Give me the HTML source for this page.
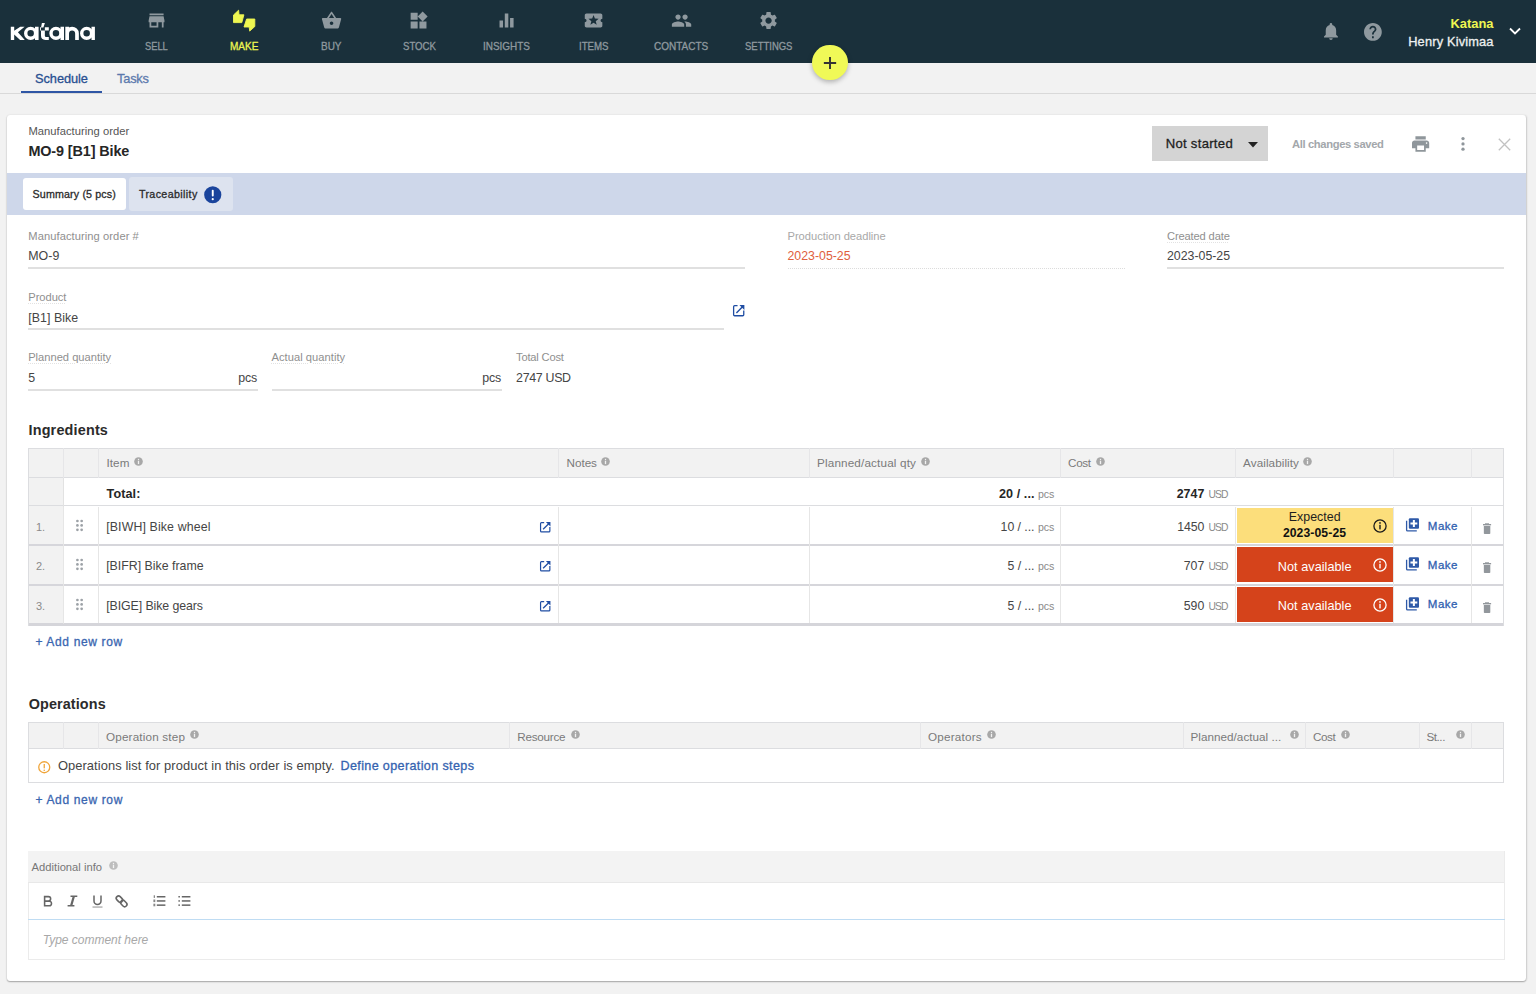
<!DOCTYPE html>
<html><head><meta charset="utf-8"><title>Katana MO-9</title>
<style>
html,body{margin:0;padding:0;}
body{width:1536px;height:994px;overflow:hidden;position:relative;background:#f2f2f2;font-family:"Liberation Sans",sans-serif;}
.t{position:absolute;white-space:nowrap;}
.r{position:absolute;display:block;overflow:visible;}
</style></head><body>
<div class="r" style="left:0px;top:0px;width:1536px;height:62.6px;background:#1a303b;"></div>
<svg class="r" style="left:0px;top:0px;" width="110" height="62" viewBox="0 0 110 62"><path fill="#fff" d="M10.8 26.7H14.2V30.8L20.3 26.7H24.6L17.9 32.3L24.8 39.9H20.1L14.2 34.4V39.9H10.8Z"/>
<g fill="none" stroke="#fff" stroke-width="3.4">
<circle cx="30.65" cy="33.35" r="4.95"/><circle cx="55.95" cy="33.35" r="4.95"/><circle cx="86.65" cy="33.35" r="4.95"/>
</g>
<path fill="#fff" d="M35 26.7H38.6V39.9H35Z M60.5 26.7H64V39.9H60.5Z M91.5 26.7H94.9V39.9H91.5Z"/>
<path fill="none" stroke="#fff" stroke-width="3.7" d="M67.15 39.9V26.7M67.15 33.3A4.93 4.93 0 0 1 77 33.3V39.9"/>
<path fill="#fff" d="M41 27.2V35.5Q41 39.9 45.4 39.9H48.8V36.9H46.1Q44.85 36.9 44.85 35.7V27.2Z M40.1 27.2H48.8V30.4H40.1Z M41 27.6L41.9 22.9H44.9L43.4 27.6Z"/></svg>
<div class="t" style="top:41px;font-size:10.4px;line-height:11px;color:#8f999f;transform:scaleX(0.8961);transform-origin:left center;-webkit-text-stroke:0.3px #8f999f;left:145.10px;">SELL</div>
<div class="t" style="top:41px;font-size:10.4px;line-height:11px;color:#eef651;transform:scaleX(0.9669);transform-origin:left center;-webkit-text-stroke:0.3px #eef651;left:229.65px;">MAKE</div>
<div class="t" style="top:41px;font-size:10.4px;line-height:11px;color:#8f999f;transform:scaleX(0.9586);transform-origin:left center;-webkit-text-stroke:0.3px #8f999f;left:321.15px;">BUY</div>
<div class="t" style="top:41px;font-size:10.4px;line-height:11px;color:#8f999f;transform:scaleX(0.9259);transform-origin:left center;-webkit-text-stroke:0.3px #8f999f;left:402.50px;">STOCK</div>
<div class="t" style="top:41px;font-size:10.4px;line-height:11px;color:#8f999f;transform:scaleX(0.9569);transform-origin:left center;-webkit-text-stroke:0.3px #8f999f;left:483.10px;">INSIGHTS</div>
<div class="t" style="top:41px;font-size:10.4px;line-height:11px;color:#8f999f;transform:scaleX(0.9314);transform-origin:left center;-webkit-text-stroke:0.3px #8f999f;left:579.00px;">ITEMS</div>
<div class="t" style="top:41px;font-size:10.4px;line-height:11px;color:#8f999f;transform:scaleX(0.9623);transform-origin:left center;-webkit-text-stroke:0.3px #8f999f;left:654.25px;">CONTACTS</div>
<div class="t" style="top:41px;font-size:10.4px;line-height:11px;color:#8f999f;transform:scaleX(0.9133);transform-origin:left center;-webkit-text-stroke:0.3px #8f999f;left:745.05px;">SETTINGS</div>
<svg class="r" style="left:146.14px;top:10.42px;" width="21.12" height="21.12" viewBox="0 0 24 24"><path fill="#8f999f" d="M20 4H4v2h16V4zm1 10v-2l-1-5H4l-1 5v2h1v6h10v-6h4v6h2v-6h1zm-9 4H6v-4h6v4z"/></svg>
<svg class="r" style="left:321.02px;top:10.42px;" width="21.12" height="21.12" viewBox="0 0 24 24"><path fill="#8f999f" d="M17.21 9l-4.38-6.56c-.19-.28-.51-.42-.83-.42-.32 0-.64.14-.83.43L6.79 9H2c-.55 0-1 .45-1 1 0 .09.01.18.04.27l2.54 9.27c.23.84 1 1.46 1.92 1.46h13c.92 0 1.69-.62 1.93-1.46l2.54-9.27L23 10c0-.55-.45-1-1-1h-4.790zM9 9l3-4.4L15 9H9zm3 8c-1.1 0-2-.9-2-2s.9-2 2-2 2 .9 2 2-.9 2-2 2z"/></svg>
<svg class="r" style="left:408.26px;top:10.42px;" width="21.12" height="21.12" viewBox="0 0 24 24"><path fill="#8f999f" d="M13 13v8h8v-8h-8zM3 21h8v-8H3v8zM3 3v8h8V3H3zm13.66-1.31L11 7.34 16.66 13l5.66-5.66-5.66-5.65z"/></svg>
<svg class="r" style="left:495.74px;top:10.42px;" width="21.12" height="21.12" viewBox="0 0 24 24"><path fill="#8f999f" d="M10 20h4V4h-4v16zm-6 0h4v-8H4v8zM16 9v11h4V9h-4z"/></svg>
<svg class="r" style="left:583.24px;top:10.42px;" width="21.12" height="21.12" viewBox="0 0 24 24"><path fill="#8f999f" d="M20 12c0-1.1.9-2 2-2V6c0-1.1-.9-2-2-2H4c-1.1 0-1.99.9-1.99 2v4c1.1 0 1.99.9 1.99 2s-.89 2-2 2v4c0 1.1.9 2 2 2h16c1.1 0 2-.9 2-2v-4c-1.1 0-2-.9-2-2zm-4.42 4.8L12 14.5l-3.58 2.3 1.08-4.12-3.29-2.69 4.24-.25L12 5.8l1.54 3.95 4.24.25-3.29 2.69 1.09 4.11z"/></svg>
<svg class="r" style="left:670.87px;top:10.42px;" width="21.12" height="21.12" viewBox="0 0 24 24"><path fill="#8f999f" d="M16 11c1.66 0 2.99-1.34 2.99-3S17.66 5 16 5c-1.66 0-3 1.34-3 3s1.34 3 3 3zm-8 0c1.66 0 2.99-1.34 2.99-3S9.66 5 8 5C6.34 5 5 6.34 5 8s1.34 3 3 3zm0 2c-2.33 0-7 1.17-7 3.5V19h14v-2.5c0-2.33-4.67-3.5-7-3.5zm8 0c-.29 0-.62.02-.97.05 1.16.84 1.97 1.97 1.97 3.45V19h6v-2.5c0-2.33-4.67-3.5-7-3.5z"/></svg>
<svg class="r" style="left:758.24px;top:10.42px;" width="21.12" height="21.12" viewBox="0 0 24 24"><path fill="#8f999f" d="M19.14 12.94c.04-.3.06-.61.06-.94 0-.32-.02-.64-.07-.94l2.03-1.58c.18-.14.23-.41.12-.61l-1.92-3.32c-.12-.22-.37-.29-.59-.22l-2.39.96c-.5-.38-1.03-.7-1.62-.94l-.36-2.54c-.04-.24-.24-.41-.48-.41h-3.84c-.24 0-.43.17-.47.41l-.36 2.54c-.59.24-1.13.57-1.62.94l-2.39-.96c-.22-.08-.47 0-.59.22L2.74 8.87c-.12.21-.08.47.12.61l2.03 1.58c-.05.3-.09.63-.09.94s.02.64.07.94l-2.03 1.58c-.18.14-.23.41-.12.61l1.92 3.32c.12.22.37.29.59.22l2.39-.96c.5.38 1.03.7 1.62.94l.36 2.54c.05.24.24.41.48.41h3.84c.24 0 .44-.17.47-.41l.36-2.54c.59-.24 1.13-.56 1.62-.94l2.39.96c.22.08.47 0 .59-.22l1.92-3.32c.12-.22.07-.47-.12-.61l-2.01-1.58zM12 15.6c-1.98 0-3.6-1.62-3.6-3.6s1.62-3.6 3.6-3.6 3.6 1.62 3.6 3.6-1.62 3.6-3.6 3.6z"/></svg>
<svg class="r" style="left:0px;top:0px;" width="800" height="40" viewBox="0 0 800 40"><path fill="#eef651" stroke="#eef651" stroke-width="0.9" stroke-linejoin="round" d="M233.5 15 L238.6 10.2 L239 14.8 L243.9 14.8 L241.8 22.6 L233.5 22.6 Z M246.6 19 L254.8 19 L254.8 26.5 L249.7 31.1 L249.2 27 L244 27 Z"/></svg>
<div class="r" style="left:812.4px;top:45.1px;width:35.4px;height:35.4px;border-radius:50%;background:#f0f957;box-shadow:0 2px 5px rgba(0,0,0,0.28);"></div>
<svg class="r" style="left:820px;top:53px;" width="20" height="20" viewBox="0 0 20 20"><path d="M10 3.9V16.1M3.85 10H16.15" stroke="#333" stroke-width="1.9" fill="none"/></svg>
<svg class="r" style="left:1324px;top:23px;" width="13.9" height="17.1" viewBox="4 2.5 16 19.5"><path fill="#8f999f" d="M12 22c1.1 0 2-.9 2-2h-4c0 1.1.89 2 2 2zm6-6v-5c0-3.07-1.64-5.64-4.5-6.32V4c0-.83-.67-1.5-1.5-1.5s-1.5.67-1.5 1.5v.68C7.63 5.36 6 7.920 6 11v5l-2 2v1h16v-1l-2-2z"/></svg>
<svg class="r" style="left:1364px;top:22.5px;" width="17.8" height="17.8" viewBox="2 2 20 20"><path fill="#8f999f" d="M12 2C6.48 2 2 6.48 2 12s4.48 10 10 10 10-4.48 10-10S17.520 2 12 2zm1 17h-2v-2h2v2zm2.07-7.75l-.9.92C13.45 12.9 13 13.5 13 15h-2v-.5c0-1.1.45-2.1 1.17-2.83l1.24-1.26c.37-.36.59-.86.59-1.41 0-1.100-.9-2-2-2s-2 .9-2 2H8c0-2.21 1.79-4 4-4s4 1.79 4 4c0 .88-.36 1.68-.93 2.25z"/></svg>
<div class="t" style="top:16px;font-size:12.9px;line-height:15px;color:#eef651;letter-spacing:-0.003px;font-weight:bold;right:42.50px;">Katana</div>
<div class="t" style="top:34px;font-size:12.8px;line-height:15px;color:#eef0f0;letter-spacing:0.173px;-webkit-text-stroke:0.3px #eef0f0;right:42.33px;">Henry Kivimaa</div>
<svg class="r" style="left:1509px;top:27px;" width="12" height="9" viewBox="0 0 12 9"><path d="M1 1.5l5 5 5-5" fill="none" stroke="#fff" stroke-width="1.8"/></svg>
<div class="r" style="left:0px;top:93px;width:1536px;height:1px;background:#d9d9d9;"></div>
<div class="t" style="top:71px;font-size:12.8px;line-height:15px;color:#284f91;letter-spacing:-0.054px;-webkit-text-stroke:0.3px #284f91;left:35.00px;">Schedule</div>
<div class="t" style="top:71px;font-size:12.8px;line-height:15px;color:#5b79ad;letter-spacing:-0.180px;-webkit-text-stroke:0.3px #5b79ad;left:117.00px;">Tasks</div>
<div class="r" style="left:21px;top:90.5px;width:81px;height:2.5px;background:#2f56a5;"></div>
<div class="r" style="left:7px;top:114.8px;width:1518.5px;height:866px;background:#fff;border-radius:3px;box-shadow:0 1px 1.5px rgba(0,0,0,0.30),0.5px 0 2px rgba(0,0,0,0.10);"></div>
<div class="t" style="top:125px;font-size:11.2px;line-height:12px;color:#555;letter-spacing:0.043px;left:28.40px;">Manufacturing order</div>
<div class="t" style="top:143px;font-size:14.4px;line-height:16px;color:#262626;letter-spacing:-0.109px;font-weight:bold;left:28.40px;">MO-9 [B1] Bike</div>
<div class="r" style="left:1151.5px;top:126px;width:116.5px;height:35px;background:#d4d4d4;"></div>
<div class="t" style="top:136px;font-size:13.1px;line-height:15px;color:#1e1e1e;letter-spacing:0.293px;-webkit-text-stroke:0.3px #1e1e1e;left:1165.70px;">Not started</div>
<svg class="r" style="left:1247.5px;top:141.5px;" width="10" height="6" viewBox="0 0 10 6"><path d="M0 0h10L5 5.5z" fill="#222"/></svg>
<div class="t" style="top:138px;font-size:11.2px;line-height:12px;color:#a3a7ab;letter-spacing:-0.358px;font-weight:bold;left:1292.00px;">All changes saved</div>
<svg class="r" style="left:1411.9px;top:135.9px;" width="17.2" height="15.8" viewBox="2 3 20 18"><path fill="#8f969b" d="M19 8H5c-1.66 0-3 1.34-3 3v6h4v4h12v-4h4v-6c0-1.66-1.34-3-3-3zm-3 11H8v-5h8v5zm3-7c-.55 0-1-.45-1-1s.45-1 1-1 1 .45 1 1-.45 1-1 1zm-1-9H6v4h12V3z"/></svg>
<svg class="r" style="left:1458.5px;top:135px;" width="8" height="17" viewBox="0 0 8 17"><g fill="#8f969b"><circle cx="4" cy="3.6" r="1.65"/><circle cx="4" cy="8.9" r="1.65"/><circle cx="4" cy="14.2" r="1.65"/></g></svg>
<svg class="r" style="left:1498px;top:137.5px;" width="13" height="13" viewBox="0 0 13 13"><path d="M0.8 0.8l11.4 11.4M12.2 0.8L0.8 12.2" stroke="#c2c2c2" stroke-width="1.3" fill="none"/></svg>
<div class="r" style="left:7px;top:173px;width:1518.5px;height:42px;background:#ced7ea;"></div>
<div class="r" style="left:23px;top:178.2px;width:102.6px;height:31.9px;background:#fff;border-radius:3px;"></div>
<div class="t" style="top:188px;font-size:10.7px;line-height:12px;color:#2b2b2b;letter-spacing:0.139px;-webkit-text-stroke:0.3px #2b2b2b;left:32.60px;">Summary (5 pcs)</div>
<div class="r" style="left:128.9px;top:176.9px;width:103.8px;height:34.6px;background:#dde3ef;border-radius:3px;"></div>
<div class="t" style="top:188px;font-size:10.7px;line-height:12px;color:#2b2b2b;letter-spacing:0.372px;-webkit-text-stroke:0.3px #2b2b2b;left:138.90px;">Traceability</div>
<svg class="r" style="left:204px;top:185.5px;" width="17.5" height="17.5" viewBox="0 0 17.5 17.5"><circle cx="8.75" cy="8.75" r="8.6" fill="#1a449c"/><rect x="7.8" y="3.8" width="1.9" height="6.7" rx="0.9" fill="#fff"/><circle cx="8.75" cy="13.2" r="1.1" fill="#fff"/></svg>
<div class="t" style="top:230px;font-size:11.15px;line-height:12px;color:#8f8f8f;letter-spacing:0.076px;left:28.30px;">Manufacturing order #</div>
<div class="t" style="top:249px;font-size:12.4px;line-height:14px;color:#454545;letter-spacing:-0.000px;left:28.30px;">MO-9</div>
<div class="r" style="left:28px;top:267.3px;width:717px;height:2.0px;background:#e0e0e0;"></div>
<div class="t" style="top:230px;font-size:11.15px;line-height:12px;color:#a8a8a8;letter-spacing:-0.015px;left:787.50px;">Production deadline</div>
<div class="t" style="top:249px;font-size:12.35px;line-height:14px;color:#e0603d;letter-spacing:-0.008px;left:787.50px;">2023-05-25</div>
<div class="r" style="left:787.5px;top:267.5px;width:337px;height:0;border-top:1.5px dotted #dcdcdc;"></div>
<div class="t" style="top:230px;font-size:11.15px;line-height:12px;color:#8f8f8f;letter-spacing:-0.143px;left:1167.00px;text-decoration:underline dotted #e2e2e2;text-underline-offset:2px;">Created date</div>
<div class="t" style="top:249px;font-size:12.35px;line-height:14px;color:#454545;letter-spacing:-0.008px;left:1167.00px;">2023-05-25</div>
<div class="r" style="left:1167px;top:267.3px;width:337px;height:2.0px;background:#e0e0e0;"></div>
<div class="t" style="top:291px;font-size:11.15px;line-height:12px;color:#8f8f8f;letter-spacing:-0.038px;left:28.30px;text-decoration:underline dotted #e2e2e2;text-underline-offset:2px;">Product</div>
<div class="t" style="top:311px;font-size:12.4px;line-height:14px;color:#454545;letter-spacing:0.022px;left:28.30px;">[B1] Bike</div>
<div class="r" style="left:28px;top:328px;width:696px;height:2px;background:#e0e0e0;"></div>
<svg class="r" style="left:732.8px;top:305.3px;" width="12.0" height="12.0" viewBox="0 0 11.6 11.6"><g fill="none" stroke="#1f4da3" stroke-width="1.25"><path d="M4.4 0.6H1.6Q0.6 0.6 0.6 1.6V9.4Q0.6 10.4 1.6 10.4H9.4Q10.4 10.4 10.4 9.4V5.4"/><path d="M3.3 7.7L9.2 1.8" stroke-width="1.35"/></g><path d="M6.2 0H11V4.8Z" fill="#1f4da3"/></svg>
<div class="t" style="top:351px;font-size:11.15px;line-height:12px;color:#8f8f8f;letter-spacing:-0.005px;left:28.20px;text-decoration:underline dotted #e2e2e2;text-underline-offset:2px;">Planned quantity</div>
<div class="t" style="top:371px;font-size:12.4px;line-height:14px;color:#454545;left:28.30px;">5</div>
<div class="t" style="top:371px;font-size:12.4px;line-height:14px;color:#454545;letter-spacing:-0.148px;right:1278.85px;">pcs</div>
<div class="r" style="left:28px;top:389px;width:229.5px;height:2px;background:#e0e0e0;"></div>
<div class="t" style="top:351px;font-size:11.15px;line-height:12px;color:#8f8f8f;letter-spacing:0.040px;left:271.50px;text-decoration:underline dotted #e2e2e2;text-underline-offset:2px;">Actual quantity</div>
<div class="t" style="top:371px;font-size:12.4px;line-height:14px;color:#454545;letter-spacing:-0.148px;right:1034.85px;">pcs</div>
<div class="r" style="left:271.5px;top:389px;width:230.0px;height:2px;background:#e0e0e0;"></div>
<div class="t" style="top:351px;font-size:11.15px;line-height:12px;color:#8f8f8f;letter-spacing:-0.197px;left:516.10px;">Total Cost</div>
<div class="t" style="top:371px;font-size:12.4px;line-height:14px;color:#454545;letter-spacing:-0.316px;left:516.10px;">2747 USD</div>
<div class="t" style="top:422px;font-size:14.4px;line-height:16px;color:#2b2b2b;letter-spacing:0.179px;font-weight:bold;left:28.50px;">Ingredients</div>
<div class="r" style="left:28px;top:448px;width:1476px;height:29.5px;background:#f2f2f2;"></div>
<div class="r" style="left:28px;top:477.5px;width:35.5px;height:147.0px;background:#f2f2f2;"></div>
<div class="r" style="left:28px;top:448px;width:1476px;height:1px;background:#dcdde0;"></div>
<div class="r" style="left:28px;top:477px;width:1476px;height:1px;background:#dcdde0;"></div>
<div class="r" style="left:28px;top:505px;width:1476px;height:1px;background:#dcdde0;"></div>
<div class="r" style="left:28px;top:544.2px;width:1476px;height:2.0px;background:#d6d6db;"></div>
<div class="r" style="left:28px;top:584px;width:1476px;height:1.6000000000000227px;background:#d6d6db;"></div>
<div class="r" style="left:28px;top:623.2px;width:1476px;height:2.7999999999999545px;background:#d5d5da;"></div>
<div class="r" style="left:28px;top:448px;width:1px;height:177.5px;background:#dcdde0;"></div>
<div class="r" style="left:1503px;top:448px;width:1px;height:177.5px;background:#dcdde0;"></div>
<div class="r" style="left:63px;top:448px;width:1px;height:29.5px;background:#e6e6e8;"></div>
<div class="r" style="left:98px;top:448px;width:1px;height:29.5px;background:#e6e6e8;"></div>
<div class="r" style="left:558px;top:448px;width:1px;height:29.5px;background:#e6e6e8;"></div>
<div class="r" style="left:809px;top:448px;width:1px;height:29.5px;background:#e6e6e8;"></div>
<div class="r" style="left:1060px;top:448px;width:1px;height:29.5px;background:#e6e6e8;"></div>
<div class="r" style="left:1235px;top:448px;width:1px;height:29.5px;background:#e6e6e8;"></div>
<div class="r" style="left:1392.5px;top:448px;width:1.0px;height:29.5px;background:#e6e6e8;"></div>
<div class="r" style="left:1471px;top:448px;width:1px;height:29.5px;background:#e6e6e8;"></div>
<div class="r" style="left:63px;top:477.5px;width:1px;height:146.5px;background:#e2e2e2;"></div>
<div class="r" style="left:63px;top:506.5px;width:1px;height:116.5px;background:#e6e6e6;"></div>
<div class="r" style="left:98px;top:506.5px;width:1px;height:116.5px;background:#e6e6e6;"></div>
<div class="r" style="left:558px;top:506.5px;width:1px;height:116.5px;background:#e6e6e6;"></div>
<div class="r" style="left:809px;top:506.5px;width:1px;height:116.5px;background:#e6e6e6;"></div>
<div class="r" style="left:1060px;top:506.5px;width:1px;height:116.5px;background:#e6e6e6;"></div>
<div class="r" style="left:1235px;top:506.5px;width:1px;height:116.5px;background:#e6e6e6;"></div>
<div class="r" style="left:1392.5px;top:506.5px;width:1.0px;height:116.5px;background:#e6e6e6;"></div>
<div class="r" style="left:1471px;top:506.5px;width:1px;height:116.5px;background:#e6e6e6;"></div>
<div class="t" style="top:456px;font-size:11.7px;line-height:13px;color:#7a7a7a;letter-spacing:0.015px;left:106.60px;">Item</div>
<svg class="r" style="left:134.2px;top:456.5px;" width="9" height="9" viewBox="0 0 9 9"><circle cx="4.5" cy="4.5" r="4.3" fill="#a8a8a8"/><rect x="3.85" y="3.7" width="1.3" height="3.4" fill="#f2f2f2"/><circle cx="4.5" cy="2.4" r="0.7" fill="#f2f2f2"/></svg>
<div class="t" style="top:456px;font-size:11.7px;line-height:13px;color:#7a7a7a;letter-spacing:-0.016px;left:566.50px;">Notes</div>
<svg class="r" style="left:601.3px;top:456.5px;" width="9" height="9" viewBox="0 0 9 9"><circle cx="4.5" cy="4.5" r="4.3" fill="#a8a8a8"/><rect x="3.85" y="3.7" width="1.3" height="3.4" fill="#f2f2f2"/><circle cx="4.5" cy="2.4" r="0.7" fill="#f2f2f2"/></svg>
<div class="t" style="top:456px;font-size:11.7px;line-height:13px;color:#7a7a7a;letter-spacing:0.161px;left:817.00px;">Planned/actual qty</div>
<svg class="r" style="left:920.8px;top:456.5px;" width="9" height="9" viewBox="0 0 9 9"><circle cx="4.5" cy="4.5" r="4.3" fill="#a8a8a8"/><rect x="3.85" y="3.7" width="1.3" height="3.4" fill="#f2f2f2"/><circle cx="4.5" cy="2.4" r="0.7" fill="#f2f2f2"/></svg>
<div class="t" style="top:456px;font-size:11.7px;line-height:13px;color:#7a7a7a;letter-spacing:-0.352px;left:1068.10px;">Cost</div>
<svg class="r" style="left:1095.5px;top:456.5px;" width="9" height="9" viewBox="0 0 9 9"><circle cx="4.5" cy="4.5" r="4.3" fill="#a8a8a8"/><rect x="3.85" y="3.7" width="1.3" height="3.4" fill="#f2f2f2"/><circle cx="4.5" cy="2.4" r="0.7" fill="#f2f2f2"/></svg>
<div class="t" style="top:456px;font-size:11.7px;line-height:13px;color:#7a7a7a;letter-spacing:0.076px;left:1243.10px;">Availability</div>
<svg class="r" style="left:1303.3px;top:456.5px;" width="9" height="9" viewBox="0 0 9 9"><circle cx="4.5" cy="4.5" r="4.3" fill="#a8a8a8"/><rect x="3.85" y="3.7" width="1.3" height="3.4" fill="#f2f2f2"/><circle cx="4.5" cy="2.4" r="0.7" fill="#f2f2f2"/></svg>
<div class="t" style="top:487px;font-size:12.6px;line-height:14px;color:#262626;letter-spacing:0.088px;font-weight:bold;left:106.60px;">Total:</div>
<div class="t" style="top:487px;font-size:12.6px;line-height:14px;color:#262626;letter-spacing:0.069px;font-weight:bold;left:999.00px;">20 / ...</div>
<div class="t" style="top:488px;font-size:10.6px;line-height:12px;color:#8a8a8a;letter-spacing:-0.198px;right:482.00px;">pcs</div>
<div class="t" style="top:487px;font-size:12.4px;line-height:14px;color:#262626;letter-spacing:0.005px;font-weight:bold;left:1176.70px;">2747</div>
<div class="t" style="top:489px;font-size:10.3px;line-height:11px;color:#8a8a8a;letter-spacing:-0.874px;right:308.37px;">USD</div>
<div class="t" style="top:521px;font-size:11px;line-height:12px;color:#8a8a8a;left:35.90px;">1.</div>
<svg class="r" style="left:75px;top:518px;" width="10" height="15" viewBox="0 0 10 15"><circle cx="2.40" cy="3.00" r="1.35" fill="#9da2a7"/><circle cx="2.40" cy="7.40" r="1.35" fill="#9da2a7"/><circle cx="2.40" cy="11.80" r="1.35" fill="#9da2a7"/><circle cx="6.65" cy="3.00" r="1.35" fill="#9da2a7"/><circle cx="6.65" cy="7.40" r="1.35" fill="#9da2a7"/><circle cx="6.65" cy="11.80" r="1.35" fill="#9da2a7"/></svg>
<div class="t" style="top:520px;font-size:12.35px;line-height:14px;color:#454545;letter-spacing:0.127px;left:106.20px;">[BIWH] Bike wheel</div>
<svg class="r" style="left:539.9px;top:521.9px;" width="11.0" height="11.0" viewBox="0 0 11.6 11.6"><g fill="none" stroke="#1f4da3" stroke-width="1.25"><path d="M4.4 0.6H1.6Q0.6 0.6 0.6 1.6V9.4Q0.6 10.4 1.6 10.4H9.4Q10.4 10.4 10.4 9.4V5.4"/><path d="M3.3 7.7L9.2 1.8" stroke-width="1.35"/></g><path d="M6.2 0H11V4.8Z" fill="#1f4da3"/></svg>
<div class="t" style="top:520px;font-size:12.3px;line-height:14px;color:#454545;letter-spacing:-0.041px;left:1000.60px;">10 / ...</div>
<div class="t" style="top:521px;font-size:10.6px;line-height:12px;color:#8a8a8a;letter-spacing:-0.198px;right:482.00px;">pcs</div>
<div class="t" style="top:520px;font-size:12.3px;line-height:14px;color:#454545;letter-spacing:-0.088px;left:1177.20px;">1450</div>
<div class="t" style="top:522px;font-size:10.3px;line-height:11px;color:#8a8a8a;letter-spacing:-0.874px;right:308.37px;">USD</div>
<div class="r" style="left:1237px;top:507.6px;width:155.5999999999999px;height:35.60000000000002px;background:#fcde7b;"></div>
<div class="t" style="top:510px;font-size:12.4px;line-height:14px;color:#1e1e1e;letter-spacing:0.043px;left:1288.70px;">Expected</div>
<div class="t" style="top:526px;font-size:12.2px;line-height:14px;color:#111;letter-spacing:0.088px;font-weight:bold;left:1282.90px;">2023-05-25</div>
<svg class="r" style="left:1372.5px;top:518.8px;" width="14" height="14" viewBox="0 0 14 14"><circle cx="7" cy="7" r="6.1" fill="none" stroke="#1a1a1a" stroke-width="1.3"/><rect x="6.3" y="5.8" width="1.4" height="4.6" fill="#1a1a1a"/><circle cx="7" cy="3.9" r="0.85" fill="#1a1a1a"/></svg>
<svg class="r" style="left:1402px;top:514px;" width="20" height="20" viewBox="0 0 20 20"><rect x="6.84" y="4.2" width="10.16" height="10.6" rx="1.1" fill="#2f5aa8"/><path fill="#fff" d="M8.45 8.56H15.3V10.56H8.45Z M10.87 6.1H12.87V12.9H10.87Z"/><path d="M4.6 6.8V15.9Q4.6 16.85 5.55 16.85H14.8" fill="none" stroke="#2f5aa8" stroke-width="1.3"/></svg>
<div class="t" style="top:520px;font-size:11.5px;line-height:12px;color:#3060b0;letter-spacing:0.526px;-webkit-text-stroke:0.3px #3060b0;left:1427.80px;">Make</div>
<svg class="r" style="left:1477px;top:518px;" width="20" height="20" viewBox="0 0 20 20"><g fill="#92979c"><rect x="6" y="6" width="8.1" height="1.4"/><rect x="8" y="5.3" width="4" height="1"/><path d="M6.84 8H13.3V15.2Q13.3 16 12.5 16H7.64Q6.84 16 6.84 15.2Z"/></g></svg>
<div class="t" style="top:560px;font-size:11px;line-height:12px;color:#8a8a8a;left:35.90px;">2.</div>
<svg class="r" style="left:75px;top:557px;" width="10" height="15" viewBox="0 0 10 15"><circle cx="2.40" cy="3.00" r="1.35" fill="#9da2a7"/><circle cx="2.40" cy="7.40" r="1.35" fill="#9da2a7"/><circle cx="2.40" cy="11.80" r="1.35" fill="#9da2a7"/><circle cx="6.65" cy="3.00" r="1.35" fill="#9da2a7"/><circle cx="6.65" cy="7.40" r="1.35" fill="#9da2a7"/><circle cx="6.65" cy="11.80" r="1.35" fill="#9da2a7"/></svg>
<div class="t" style="top:559px;font-size:12.35px;line-height:14px;color:#454545;letter-spacing:-0.003px;left:106.20px;">[BIFR] Bike frame</div>
<svg class="r" style="left:539.9px;top:561.1999999999999px;" width="11.0" height="11.0" viewBox="0 0 11.6 11.6"><g fill="none" stroke="#1f4da3" stroke-width="1.25"><path d="M4.4 0.6H1.6Q0.6 0.6 0.6 1.6V9.4Q0.6 10.4 1.6 10.4H9.4Q10.4 10.4 10.4 9.4V5.4"/><path d="M3.3 7.7L9.2 1.8" stroke-width="1.35"/></g><path d="M6.2 0H11V4.8Z" fill="#1f4da3"/></svg>
<div class="t" style="top:559px;font-size:12.3px;line-height:14px;color:#454545;letter-spacing:-0.057px;left:1007.50px;">5 / ...</div>
<div class="t" style="top:560px;font-size:10.6px;line-height:12px;color:#8a8a8a;letter-spacing:-0.198px;right:482.00px;">pcs</div>
<div class="t" style="top:559px;font-size:12.3px;line-height:14px;color:#454545;letter-spacing:-0.011px;left:1183.80px;">707</div>
<div class="t" style="top:561px;font-size:10.3px;line-height:11px;color:#8a8a8a;letter-spacing:-0.874px;right:308.37px;">USD</div>
<div class="r" style="left:1237px;top:547px;width:155.5999999999999px;height:35.299999999999955px;background:#d5431b;"></div>
<div class="t" style="top:560px;font-size:12.7px;line-height:14px;color:#fff;letter-spacing:0.031px;left:1277.80px;">Not available</div>
<svg class="r" style="left:1372.5px;top:558.2px;" width="14" height="14" viewBox="0 0 14 14"><circle cx="7" cy="7" r="6.1" fill="none" stroke="#fff" stroke-width="1.3"/><rect x="6.3" y="5.8" width="1.4" height="4.6" fill="#fff"/><circle cx="7" cy="3.9" r="0.85" fill="#fff"/></svg>
<svg class="r" style="left:1402px;top:553px;" width="20" height="20" viewBox="0 0 20 20"><rect x="6.84" y="4.2" width="10.16" height="10.6" rx="1.1" fill="#2f5aa8"/><path fill="#fff" d="M8.45 8.56H15.3V10.56H8.45Z M10.87 6.1H12.87V12.9H10.87Z"/><path d="M4.6 6.8V15.9Q4.6 16.85 5.55 16.85H14.8" fill="none" stroke="#2f5aa8" stroke-width="1.3"/></svg>
<div class="t" style="top:559px;font-size:11.5px;line-height:12px;color:#3060b0;letter-spacing:0.526px;-webkit-text-stroke:0.3px #3060b0;left:1427.80px;">Make</div>
<svg class="r" style="left:1477px;top:557px;" width="20" height="20" viewBox="0 0 20 20"><g fill="#92979c"><rect x="6" y="6" width="8.1" height="1.4"/><rect x="8" y="5.3" width="4" height="1"/><path d="M6.84 8H13.3V15.2Q13.3 16 12.5 16H7.64Q6.84 16 6.84 15.2Z"/></g></svg>
<div class="t" style="top:600px;font-size:11px;line-height:12px;color:#8a8a8a;left:35.90px;">3.</div>
<svg class="r" style="left:75px;top:597px;" width="10" height="15" viewBox="0 0 10 15"><circle cx="2.40" cy="3.00" r="1.35" fill="#9da2a7"/><circle cx="2.40" cy="7.40" r="1.35" fill="#9da2a7"/><circle cx="2.40" cy="11.80" r="1.35" fill="#9da2a7"/><circle cx="6.65" cy="3.00" r="1.35" fill="#9da2a7"/><circle cx="6.65" cy="7.40" r="1.35" fill="#9da2a7"/><circle cx="6.65" cy="11.80" r="1.35" fill="#9da2a7"/></svg>
<div class="t" style="top:599px;font-size:12.35px;line-height:14px;color:#454545;letter-spacing:-0.085px;left:106.20px;">[BIGE] Bike gears</div>
<svg class="r" style="left:539.9px;top:600.6999999999999px;" width="11.0" height="11.0" viewBox="0 0 11.6 11.6"><g fill="none" stroke="#1f4da3" stroke-width="1.25"><path d="M4.4 0.6H1.6Q0.6 0.6 0.6 1.6V9.4Q0.6 10.4 1.6 10.4H9.4Q10.4 10.4 10.4 9.4V5.4"/><path d="M3.3 7.7L9.2 1.8" stroke-width="1.35"/></g><path d="M6.2 0H11V4.8Z" fill="#1f4da3"/></svg>
<div class="t" style="top:599px;font-size:12.3px;line-height:14px;color:#454545;letter-spacing:-0.057px;left:1007.50px;">5 / ...</div>
<div class="t" style="top:600px;font-size:10.6px;line-height:12px;color:#8a8a8a;letter-spacing:-0.198px;right:482.00px;">pcs</div>
<div class="t" style="top:599px;font-size:12.3px;line-height:14px;color:#454545;letter-spacing:-0.011px;left:1183.80px;">590</div>
<div class="t" style="top:601px;font-size:10.3px;line-height:11px;color:#8a8a8a;letter-spacing:-0.874px;right:308.37px;">USD</div>
<div class="r" style="left:1237px;top:586.6px;width:155.5999999999999px;height:35.299999999999955px;background:#d5431b;"></div>
<div class="t" style="top:599px;font-size:12.7px;line-height:14px;color:#fff;letter-spacing:0.031px;left:1277.80px;">Not available</div>
<svg class="r" style="left:1372.5px;top:597.8000000000001px;" width="14" height="14" viewBox="0 0 14 14"><circle cx="7" cy="7" r="6.1" fill="none" stroke="#fff" stroke-width="1.3"/><rect x="6.3" y="5.8" width="1.4" height="4.6" fill="#fff"/><circle cx="7" cy="3.9" r="0.85" fill="#fff"/></svg>
<svg class="r" style="left:1402px;top:593px;" width="20" height="20" viewBox="0 0 20 20"><rect x="6.84" y="4.2" width="10.16" height="10.6" rx="1.1" fill="#2f5aa8"/><path fill="#fff" d="M8.45 8.56H15.3V10.56H8.45Z M10.87 6.1H12.87V12.9H10.87Z"/><path d="M4.6 6.8V15.9Q4.6 16.85 5.55 16.85H14.8" fill="none" stroke="#2f5aa8" stroke-width="1.3"/></svg>
<div class="t" style="top:598px;font-size:11.5px;line-height:12px;color:#3060b0;letter-spacing:0.526px;-webkit-text-stroke:0.3px #3060b0;left:1427.80px;">Make</div>
<svg class="r" style="left:1477px;top:597px;" width="20" height="20" viewBox="0 0 20 20"><g fill="#92979c"><rect x="6" y="6" width="8.1" height="1.4"/><rect x="8" y="5.3" width="4" height="1"/><path d="M6.84 8H13.3V15.2Q13.3 16 12.5 16H7.64Q6.84 16 6.84 15.2Z"/></g></svg>
<div class="t" style="top:635px;font-size:12px;line-height:14px;color:#3a66b0;letter-spacing:0.646px;-webkit-text-stroke:0.3px #3a66b0;left:35.40px;">+ Add new row</div>
<div class="t" style="top:696px;font-size:14.4px;line-height:16px;color:#2b2b2b;letter-spacing:0.109px;font-weight:bold;left:28.70px;">Operations</div>
<div class="r" style="left:28px;top:721.5px;width:1476px;height:27.200000000000045px;background:#f2f2f2;"></div>
<div class="r" style="left:28px;top:721.5px;width:1476px;height:1.0px;background:#dcdde0;"></div>
<div class="r" style="left:28px;top:747.7px;width:1476px;height:1.0px;background:#dcdde0;"></div>
<div class="r" style="left:28px;top:782.3px;width:1476px;height:1.0px;background:#dcdde0;"></div>
<div class="r" style="left:28px;top:721.5px;width:1px;height:61.799999999999955px;background:#dcdde0;"></div>
<div class="r" style="left:1503px;top:721.5px;width:1px;height:61.799999999999955px;background:#dcdde0;"></div>
<div class="r" style="left:63px;top:721.5px;width:1px;height:27.200000000000045px;background:#e6e6e8;"></div>
<div class="r" style="left:98px;top:721.5px;width:1px;height:27.200000000000045px;background:#e6e6e8;"></div>
<div class="r" style="left:509px;top:721.5px;width:1px;height:27.200000000000045px;background:#e6e6e8;"></div>
<div class="r" style="left:920px;top:721.5px;width:1px;height:27.200000000000045px;background:#e6e6e8;"></div>
<div class="r" style="left:1183px;top:721.5px;width:1px;height:27.200000000000045px;background:#e6e6e8;"></div>
<div class="r" style="left:1305px;top:721.5px;width:1px;height:27.200000000000045px;background:#e6e6e8;"></div>
<div class="r" style="left:1419px;top:721.5px;width:1px;height:27.200000000000045px;background:#e6e6e8;"></div>
<div class="r" style="left:1471px;top:721.5px;width:1px;height:27.200000000000045px;background:#e6e6e8;"></div>
<div class="t" style="top:730px;font-size:11.7px;line-height:13px;color:#7a7a7a;letter-spacing:0.173px;left:106.00px;">Operation step</div>
<svg class="r" style="left:189.6px;top:730.3px;" width="9" height="9" viewBox="0 0 9 9"><circle cx="4.5" cy="4.5" r="4.3" fill="#a8a8a8"/><rect x="3.85" y="3.7" width="1.3" height="3.4" fill="#f2f2f2"/><circle cx="4.5" cy="2.4" r="0.7" fill="#f2f2f2"/></svg>
<div class="t" style="top:730px;font-size:11.7px;line-height:13px;color:#7a7a7a;letter-spacing:-0.239px;left:517.20px;">Resource</div>
<svg class="r" style="left:570.5px;top:730.3px;" width="9" height="9" viewBox="0 0 9 9"><circle cx="4.5" cy="4.5" r="4.3" fill="#a8a8a8"/><rect x="3.85" y="3.7" width="1.3" height="3.4" fill="#f2f2f2"/><circle cx="4.5" cy="2.4" r="0.7" fill="#f2f2f2"/></svg>
<div class="t" style="top:730px;font-size:11.7px;line-height:13px;color:#7a7a7a;letter-spacing:0.222px;left:927.90px;">Operators</div>
<svg class="r" style="left:986.5px;top:730.3px;" width="9" height="9" viewBox="0 0 9 9"><circle cx="4.5" cy="4.5" r="4.3" fill="#a8a8a8"/><rect x="3.85" y="3.7" width="1.3" height="3.4" fill="#f2f2f2"/><circle cx="4.5" cy="2.4" r="0.7" fill="#f2f2f2"/></svg>
<div class="t" style="top:730px;font-size:11.7px;line-height:13px;color:#7a7a7a;letter-spacing:0.029px;left:1190.50px;">Planned/actual ...</div>
<svg class="r" style="left:1289.6px;top:730.3px;" width="9" height="9" viewBox="0 0 9 9"><circle cx="4.5" cy="4.5" r="4.3" fill="#a8a8a8"/><rect x="3.85" y="3.7" width="1.3" height="3.4" fill="#f2f2f2"/><circle cx="4.5" cy="2.4" r="0.7" fill="#f2f2f2"/></svg>
<div class="t" style="top:730px;font-size:11.7px;line-height:13px;color:#7a7a7a;letter-spacing:-0.419px;left:1313.00px;">Cost</div>
<svg class="r" style="left:1341.2px;top:730.3px;" width="9" height="9" viewBox="0 0 9 9"><circle cx="4.5" cy="4.5" r="4.3" fill="#a8a8a8"/><rect x="3.85" y="3.7" width="1.3" height="3.4" fill="#f2f2f2"/><circle cx="4.5" cy="2.4" r="0.7" fill="#f2f2f2"/></svg>
<div class="t" style="top:730px;font-size:11.7px;line-height:13px;color:#7a7a7a;letter-spacing:-0.476px;left:1426.50px;">St...</div>
<svg class="r" style="left:1455.8px;top:730.3px;" width="9" height="9" viewBox="0 0 9 9"><circle cx="4.5" cy="4.5" r="4.3" fill="#a8a8a8"/><rect x="3.85" y="3.7" width="1.3" height="3.4" fill="#f2f2f2"/><circle cx="4.5" cy="2.4" r="0.7" fill="#f2f2f2"/></svg>
<svg class="r" style="left:37.5px;top:760.5px;" width="12.5" height="12.5" viewBox="0 0 12.5 12.5"><circle cx="6.25" cy="6.25" r="5.5" fill="none" stroke="#f0a53a" stroke-width="1.3"/><rect x="5.6" y="3" width="1.3" height="4.3" fill="#f0a53a"/><circle cx="6.25" cy="9.2" r="0.8" fill="#f0a53a"/></svg>
<div class="t" style="top:758px;font-size:12.9px;line-height:15px;color:#454545;letter-spacing:0.081px;left:57.90px;">Operations list for product in this order is empty.</div>
<div class="t" style="top:759px;font-size:12.6px;line-height:14px;color:#3563b0;letter-spacing:0.353px;-webkit-text-stroke:0.3px #3563b0;left:340.50px;">Define operation steps</div>
<div class="t" style="top:793px;font-size:12px;line-height:14px;color:#3a66b0;letter-spacing:0.646px;-webkit-text-stroke:0.3px #3a66b0;left:35.50px;">+ Add new row</div>
<div class="r" style="left:28px;top:850.5px;width:1476.5px;height:32.0px;background:#f3f3f3;"></div>
<div class="r" style="left:28px;top:882px;width:1476.5px;height:1px;background:#e8e8e8;"></div>
<div class="r" style="left:28px;top:882.5px;width:1px;height:77.0px;background:#ebebeb;"></div>
<div class="r" style="left:1503.5px;top:850.5px;width:1.0px;height:109.0px;background:#ebebeb;"></div>
<div class="r" style="left:28px;top:919.3px;width:1476.5px;height:1.2000000000000455px;background:#bfdcf3;"></div>
<div class="r" style="left:28px;top:958.5px;width:1476.5px;height:1.0px;background:#ebebeb;"></div>
<div class="t" style="top:861px;font-size:11.2px;line-height:12px;color:#777;letter-spacing:0.010px;left:31.60px;">Additional info</div>
<svg class="r" style="left:108.8px;top:861.2px;" width="9" height="9" viewBox="0 0 9 9"><circle cx="4.5" cy="4.5" r="4.3" fill="#bdbdbd"/><rect x="3.85" y="3.7" width="1.3" height="3.4" fill="#f3f3f3"/><circle cx="4.5" cy="2.4" r="0.7" fill="#f3f3f3"/></svg>
<svg class="r" style="left:36px;top:888px;" width="20" height="20" viewBox="0 0 20 20"><path fill="none" stroke="#666" stroke-width="1.55" d="M8.6 8.6H12.4A2.25 2.25 0 0 1 12.4 13.1H8.6ZM8.6 13.1H13.2A2.3 2.3 0 0 1 13.2 17.7H8.6Z"/></svg>
<svg class="r" style="left:67.3px;top:895.2px;" width="10.5" height="12" viewBox="0 0 10.5 12"><path fill="#666" d="M3.5 0.5H10.3V2H7.8L5.5 9.9H7.4V11.4H0.6V9.9H3.2L5.5 2H3.5Z"/></svg>
<svg class="r" style="left:91.8px;top:895px;" width="11.5" height="12.8" viewBox="0 0 11.5 12.8"><path fill="none" stroke="#666" stroke-width="1.5" d="M2 0.4V6A3.5 3.5 0 0 0 9 6V0.4"/><rect x="0.5" y="11.5" width="10" height="1.1" fill="#999"/></svg>
<svg class="r" style="left:115px;top:894.8px;" width="13.5" height="12.8" viewBox="0 0 13.5 12.8"><g fill="none" stroke="#666" stroke-width="1.6"><rect x="0.9" y="1.8" width="7" height="4.6" rx="2.3" transform="rotate(45 4.4 4.1)"/><rect x="5.3" y="6.2" width="7" height="4.6" rx="2.3" transform="rotate(45 8.8 8.5)"/></g></svg>
<svg class="r" style="left:152.8px;top:895px;" width="13" height="12" viewBox="0 0 13 12"><g fill="#666"><rect x="3.8" y="1" width="8.6" height="1.5"/><rect x="3.8" y="5.2" width="8.6" height="1.5"/><rect x="3.8" y="9.4" width="8.6" height="1.5"/><rect x="0.7" y="0.3" width="1.3" height="2.6" fill="#888"/><rect x="0.4" y="4.5" width="1.9" height="2.6" fill="#888"/><rect x="0.4" y="8.7" width="1.9" height="2.6" fill="#888"/></g></svg>
<svg class="r" style="left:177.5px;top:895px;" width="13" height="12" viewBox="0 0 13 12"><g fill="#666"><rect x="3.8" y="1" width="8.6" height="1.5"/><rect x="3.8" y="5.2" width="8.6" height="1.5"/><rect x="3.8" y="9.4" width="8.6" height="1.5"/><rect x="0.4" y="1" width="1.5" height="1.5"/><rect x="0.4" y="5.2" width="1.5" height="1.5"/><rect x="0.4" y="9.4" width="1.5" height="1.5"/></g></svg>
<div class="t" style="top:933px;font-size:12px;line-height:14px;color:#a8a8a8;letter-spacing:-0.020px;font-style:italic;left:42.80px;">Type comment here</div>
</body></html>
